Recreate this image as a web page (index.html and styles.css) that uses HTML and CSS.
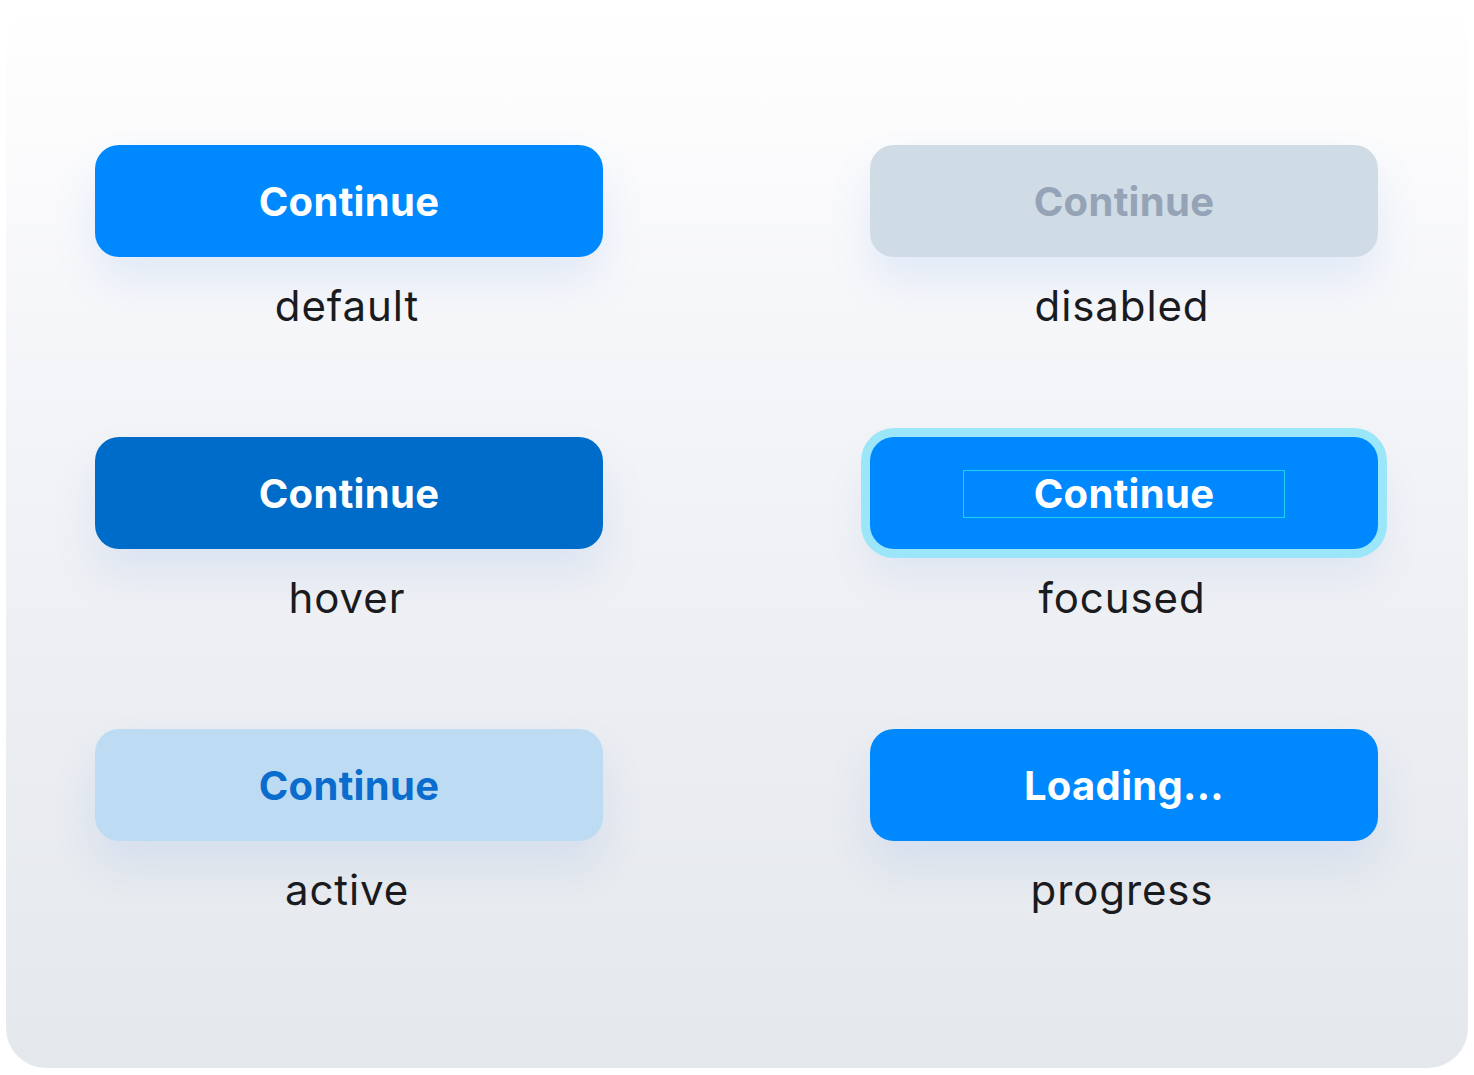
FILE: index.html
```html
<!DOCTYPE html>
<html lang="en">
<head>
  <meta charset="UTF-8" />
  <meta name="viewport" content="width=device-width, initial-scale=1.0"/>
  <title>Button States</title>
  <link rel="stylesheet" href="styles.css">
</head>
<body>
  <div class="board">
    <div class="state">
      <button class="btn">Continue</button>
      <p class="caption">default</p>
    </div>
    <div class="state">
      <button class="btn btn-disabled" disabled>Continue</button>
      <p class="caption">disabled</p>
    </div>
    <div class="state">
      <button class="btn btn-hover">Continue</button>
      <p class="caption">hover</p>
    </div>
    <div class="state">
      <button class="btn btn-focused"><span class="focus-box">Continue</span></button>
      <p class="caption">focused</p>
    </div>
    <div class="state">
      <button class="btn btn-active">Continue</button>
      <p class="caption">active</p>
    </div>
    <div class="state">
      <button class="btn">Loading...</button>
      <p class="caption">progress</p>
    </div>
  </div>
</body>
</html>
```

FILE: styles.css
```css
body {
  margin: 0;
  background: #ffffff;
  font-family: Inter, 'Noto Sans', sans-serif;
  color: #1a1b1e;
}

.board {
  margin: 0 6px;
  height: 1068px;
  box-sizing: border-box;
  padding: 145px 90px 0 89px;
  border-radius: 40px;
  background: linear-gradient(180deg, #ffffff 0%, #f4f5f8 35%, #eceef2 65%, #e4e8ec 100%);
  display: grid;
  grid-template-columns: 508px 508px;
  column-gap: 267px;
  grid-auto-rows: 186px;
  row-gap: 106px;
}

.state {
  display: flex;
  flex-direction: column;
  align-items: center;
}

.btn {
  width: 508px;
  height: 112px;
  border: none;
  border-radius: 24px;
  background: #0088ff;
  color: #ffffff;
  font-family: inherit;
  font-size: 40px;
  font-weight: 700;
  letter-spacing: 0.3px;
  box-shadow: 0 24px 44px rgba(70, 130, 230, 0.12);
  cursor: pointer;
}

.btn-hover {
  background: #006cc9;
}

.btn-disabled {
  background: #cfdbe5;
  color: #95a3b7;
  cursor: default;
}

.btn-active {
  background: #bddcf3;
  color: #0a6ccc;
}

.btn-focused {
  box-shadow: 0 0 0 9px #9ce6f9, 0 24px 44px rgba(70, 130, 230, 0.12);
}

.focus-box {
  display: inline-block;
  padding: 0 70px;
  line-height: 46px;
  border: 1px solid #18d2f6;
}

.caption {
  margin: 25px 0 0 -4px;
  font-size: 42px;
  line-height: 48px;
  font-weight: 400;
  letter-spacing: 0.9px;
}
```
